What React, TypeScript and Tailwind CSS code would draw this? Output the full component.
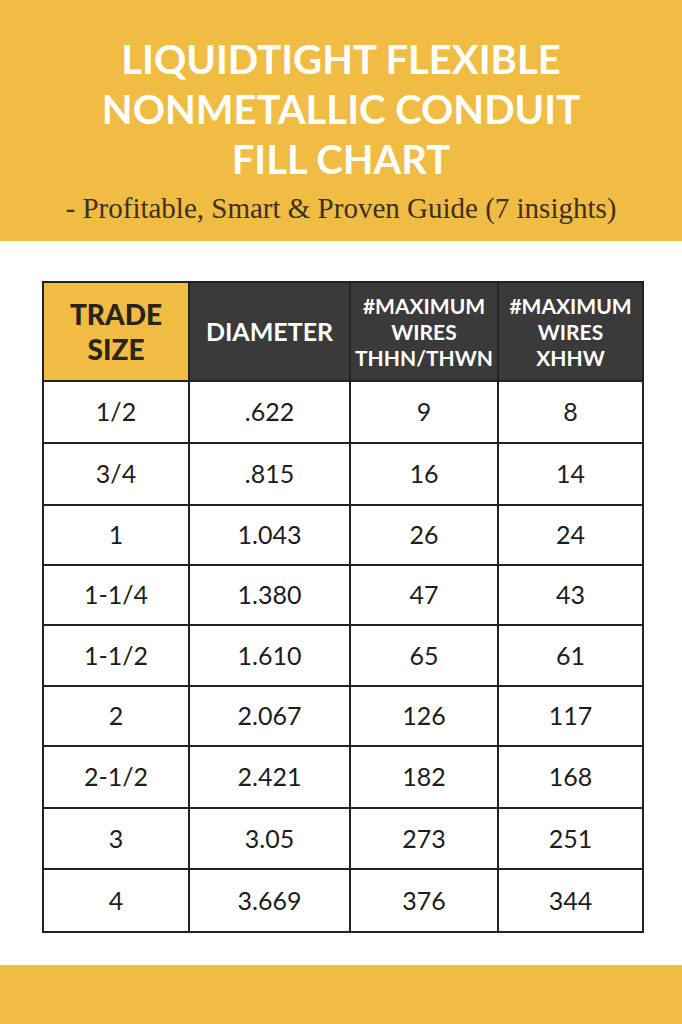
import React from "react";

const rows = [
  ["1/2", ".622", "9", "8"],
  ["3/4", ".815", "16", "14"],
  ["1", "1.043", "26", "24"],
  ["1-1/4", "1.380", "47", "43"],
  ["1-1/2", "1.610", "65", "61"],
  ["2", "2.067", "126", "117"],
  ["2-1/2", "2.421", "182", "168"],
  ["3", "3.05", "273", "251"],
  ["4", "3.669", "376", "344"],
];

const rowHeights = ["h-[62px]", "h-[62px]", "h-[60px]", "h-[60px]", "h-[61px]", "h-[60px]", "h-[62px]", "h-[61px]", "h-[61px]"];

export default function App() {
  return (
    <div className="w-[682px] h-[1024px] bg-white flex flex-col" style={{ fontFamily: "Lato, 'Noto Sans', sans-serif" }}>
      <div className="h-[241px] bg-[#f1bc43] flex flex-col items-center pt-[34px]">
        <h1 className="text-white font-bold text-[40px] leading-[50px] text-center">
          LIQUIDTIGHT FLEXIBLE
          <br />
          NONMETALLIC CONDUIT
          <br />
          FILL CHART
        </h1>
        <p className="mt-[8px] text-[#3b321f] text-[29px] leading-[32px]" style={{ fontFamily: "'Liberation Serif', 'DejaVu Serif', serif" }}>
          - Profitable, Smart &amp; Proven Guide (7 insights)
        </p>
      </div>
      <div className="flex-1 flex flex-col pt-[40px] pl-[42px]">
        <div className="w-[602px] border-2 border-[#222] grid grid-cols-[146px_161px_148px_143px] text-[#1d1d1d]">
          <div className="h-[99px] bg-[#f1bc43] border-r-2 border-b-2 border-[#222] flex items-center justify-center text-center font-black text-[28px] leading-[35px] text-[#2a2418]">
            TRADE
            <br />
            SIZE
          </div>
          <div className="h-[99px] bg-[#3a3a3a] border-r-2 border-b-2 border-[#222] flex items-center justify-center text-white font-bold text-[25px]">
            DIAMETER
          </div>
          <div className="h-[99px] bg-[#3a3a3a] border-r-2 border-b-2 border-[#222] flex items-center justify-center text-center text-white font-bold text-[21px] leading-[26px]">
            #MAXIMUM
            <br />
            WIRES
            <br />
            THHN/THWN
          </div>
          <div className="h-[99px] bg-[#3a3a3a] border-b-2 border-[#222] flex items-center justify-center text-center text-white font-bold text-[21px] leading-[26px]">
            #MAXIMUM
            <br />
            WIRES
            <br />
            XHHW
          </div>
          {rows.map((r, i) => (
            <React.Fragment key={i}>
              {r.map((c, j) => (
                <div
                  key={j}
                  className={
                    "flex items-center justify-center text-[25px] border-[#222] " +
                    rowHeights[i] +
                    (j < 3 ? " border-r-2" : "") +
                    (i < rows.length - 1 ? " border-b-2" : "")
                  }
                >
                  {c}
                </div>
              ))}
            </React.Fragment>
          ))}
        </div>
      </div>
      <div className="h-[59px] bg-[#f1bc43]" />
    </div>
  );
}
